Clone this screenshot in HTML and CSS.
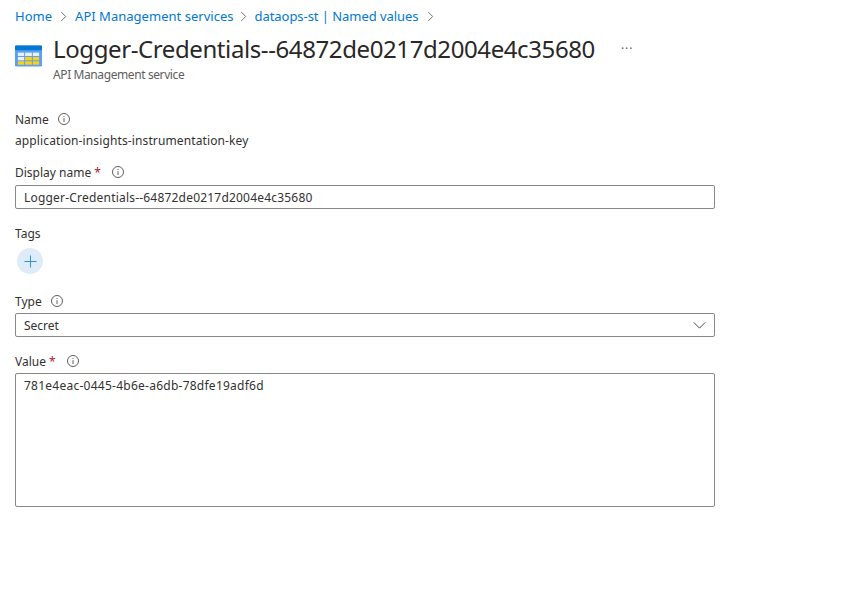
FILE: index.html
```html
<!DOCTYPE html>
<html lang="en">
<head>
    <meta charset="UTF-8">
    <title>Logger-Credentials</title>
    <link rel="stylesheet" href="styles.css">
</head>
<body>
    <!-- Breadcrumb -->
    <nav class="breadcrumb">
        <a class="crumb">Home</a>
        <svg class="crumb-sep" viewBox="0 0 8 12"><path d="M1.5 1 L6.5 6 L1.5 11"/></svg>
        <a class="crumb">API Management services</a>
        <svg class="crumb-sep crumb-sep-tight" viewBox="0 0 8 12"><path d="M1.5 1 L6.5 6 L1.5 11"/></svg>
        <a class="crumb crumb-last">dataops-st | Named values</a>
        <svg class="crumb-sep" viewBox="0 0 8 12"><path d="M1.5 1 L6.5 6 L1.5 11"/></svg>
    </nav>

    <!-- Header -->
    <header class="page-header">
        <svg class="service-icon" viewBox="0 0 28 22">
            <rect x="0" y="0" width="28" height="22" rx="1.5" fill="#5ea0ef"/>
            <rect x="0" y="0" width="28" height="5" rx="1" fill="#0078d4"/>
            <rect x="3" y="7.5" width="6.5" height="3.5" fill="#e6f0fc"/>
            <rect x="10.5" y="7.5" width="7" height="3.5" fill="#e6f0fc"/>
            <rect x="18.5" y="7.5" width="6.5" height="3.5" fill="#e6f0fc"/>
            <rect x="3" y="12" width="6.5" height="3.5" fill="#e6f0fc"/>
            <rect x="10.5" y="12" width="7" height="3.5" fill="#fcd116"/>
            <rect x="18.5" y="12" width="6.5" height="3.5" fill="#fcd116"/>
            <rect x="3" y="16.5" width="6.5" height="3.5" fill="#fcd116"/>
            <rect x="10.5" y="16.5" width="7" height="3.5" fill="#fcd116"/>
            <rect x="18.5" y="16.5" width="6.5" height="3.5" fill="#fcd116"/>
        </svg>
        <div class="title-block">
            <div class="title-row">
                <h1>Logger-Credentials--64872de0217d2004e4c35680</h1>
                <span class="more">···</span>
            </div>
            <p class="subtitle">API Management service</p>
        </div>
    </header>

    <!-- Form -->
    <form class="form">
        <div class="field field-name">
            <div class="label">Name
                <svg class="info info-wide" viewBox="0 0 12 12"><circle cx="6" cy="6" r="5.5"/><path d="M6 5.2 V9 M6 3 V4"/></svg>
            </div>
            <div class="static-value">application-insights-instrumentation-key</div>
        </div>

        <div class="field field-display">
            <div class="label">Display name <span class="req">*</span>
                <svg class="info" viewBox="0 0 12 12"><circle cx="6" cy="6" r="5.5"/><path d="M6 5.2 V9 M6 3 V4"/></svg>
            </div>
            <div class="input input-long">Logger-Credentials--64872de0217d2004e4c35680</div>
        </div>

        <div class="field field-tags">
            <div class="label">Tags</div>
            <button type="button" class="add-tag">
                <svg viewBox="0 0 14 14"><path d="M7 0.5 V13.5 M0.5 7 H13.5"/></svg>
            </button>
        </div>

        <div class="field field-type">
            <div class="label">Type
                <svg class="info info-wide" viewBox="0 0 12 12"><circle cx="6" cy="6" r="5.5"/><path d="M6 5.2 V9 M6 3 V4"/></svg>
            </div>
            <div class="input select">Secret
                <svg class="chevron" viewBox="0 0 14 8"><path d="M0.5 0.5 L7 7 L13.5 0.5"/></svg>
            </div>
        </div>

        <div class="field field-value">
            <div class="label">Value <span class="req">*</span>
                <svg class="info" viewBox="0 0 12 12"><circle cx="6" cy="6" r="5.5"/><path d="M6 5.2 V9 M6 3 V4"/></svg>
            </div>
            <div class="input textarea">781e4eac-0445-4b6e-a6db-78dfe19adf6d</div>
        </div>
    </form>
</body>
</html>
```

FILE: styles.css
```css
/* Global */
body {
    margin: 0;
    padding: 0 15px;
    background: #fff;
    color: #323130;
    font-family: "Noto Sans", "Open Sans", sans-serif;
    font-size: 12px;
}

/* Breadcrumb */
.breadcrumb {
    display: flex;
    align-items: center;
    height: 18px;
    padding-top: 7px;
    gap: 8px;
    font-size: 13px;
}

.crumb {
    color: #0078d4;
    letter-spacing: 0.02px;
}

.crumb-last {
    letter-spacing: -0.05px;
}

.crumb-sep {
    width: 7px;
    height: 11px;
    fill: none;
    stroke: #605e5c;
    stroke-width: 1;
}

.crumb-sep-tight {
    margin-left: -2px;
}

/* Header */
.page-header {
    display: flex;
    align-items: flex-start;
    gap: 11px;
    margin-top: 6px;
}

.service-icon {
    width: 27px;
    height: 22px;
    margin-top: 14px;
    flex: none;
}

.title-row {
    display: flex;
    align-items: center;
    height: 34px;
    margin-bottom: 2px;
}

h1 {
    margin: 0;
    font-size: 24px;
    font-weight: 400;
    letter-spacing: -0.4px;
    color: #292827;
    white-space: nowrap;
}

.more {
    margin-left: 26px;
    font-size: 12px;
    letter-spacing: 1px;
    color: #605e5c;
}

.subtitle {
    margin: 0;
    font-size: 12px;
    line-height: 16px;
    letter-spacing: -0.4px;
    color: #605e5c;
}

/* Form */
.form {
    width: 700px;
    margin-top: 27px;
}

.field-display {
    margin-top: 13px;
}

.field-tags {
    margin-top: 15px;
}

.field-tags .label {
    margin-bottom: 6px;
}

.field-type {
    margin-top: 18px;
}

.field-type .label,
.field-value .label {
    margin-bottom: 3px;
}

.field-value {
    margin-top: 15px;
}

.label {
    display: flex;
    align-items: center;
    height: 18px;
    gap: 3px;
    margin-bottom: 4px;
}

.req {
    color: #a4262c;
    margin-right: 4px;
}

.info {
    width: 12px;
    height: 12px;
    margin-left: 4px;
    fill: none;
    stroke: #605e5c;
    stroke-width: 1;
}

.info-wide {
    margin-left: 6px;
}

.static-value {
    line-height: 18px;
    letter-spacing: 0.12px;
}

.input {
    box-sizing: border-box;
    display: flex;
    align-items: center;
    justify-content: space-between;
    height: 24px;
    padding: 0 8px;
    border: 1px solid #8a8886;
    border-radius: 2px;
}

.input-long {
    letter-spacing: 0.2px;
}

.chevron {
    width: 13px;
    height: 7px;
    fill: none;
    stroke: #323130;
    stroke-width: 1;
}

.textarea {
    align-items: flex-start;
    height: 134px;
    padding-top: 3px;
    letter-spacing: 0.25px;
}

.add-tag {
    display: flex;
    align-items: center;
    justify-content: center;
    width: 26px;
    height: 26px;
    margin-left: 2px;
    padding: 0;
    border: none;
    border-radius: 50%;
    background: #deecf9;
}

.add-tag svg {
    width: 13px;
    height: 13px;
    fill: none;
    stroke: #2b88d8;
    stroke-width: 1;
}
```
